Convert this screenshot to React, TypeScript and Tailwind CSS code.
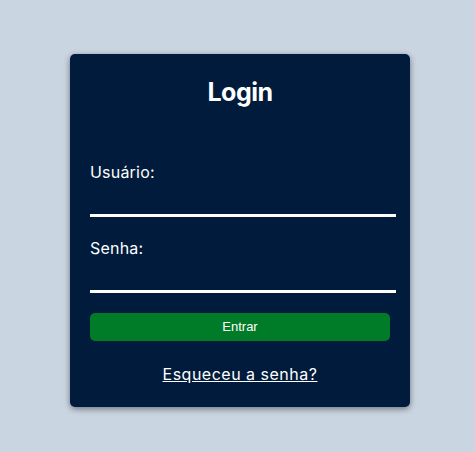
import React from "react";

export default function App() {
  return (
    <div className="min-h-screen w-full bg-[#cad5e2] pt-[54px]" style={{ height: 452 }}>
      <div
        className="ml-[70px] w-[340px] rounded-[5px] bg-[#001b3b] px-5 pt-[22px] pb-[21px] text-white shadow-[0_2px_6px_rgba(0,0,0,0.45)]"
        style={{ fontFamily: "Inter, 'Noto Sans', sans-serif" }}
      >
        <h1 className="text-center text-[25px] font-bold leading-[32px] tracking-[-0.5px]">Login</h1>
        <div className="mt-[52px] flex flex-col">
          <label className="text-[16px] leading-[24px] tracking-[0.2px]">Usuário:</label>
          <input
            type="text"
            className="mt-[12px] h-[21px] w-[306px] border-b-[3px] border-white bg-transparent outline-none"
          />
        </div>
        <div className="mt-[19px] flex flex-col">
          <label className="text-[16px] leading-[24px] tracking-[0.2px]">Senha:</label>
          <input
            type="password"
            className="mt-[12px] h-[21px] w-[306px] border-b-[3px] border-white bg-transparent outline-none"
          />
        </div>
        <button
          className="mt-[20px] h-[28px] w-[300px] rounded-[5px] bg-[#007b28] text-[13px] text-white"
          style={{ fontFamily: "'Liberation Sans', Arial, sans-serif" }}
        >
          Entrar
        </button>
        <div className="mt-[21px] text-center">
          <a href="#" className="text-[16px] leading-[24px] tracking-[0.5px] text-white underline">
            Esqueceu a senha?
          </a>
        </div>
      </div>
    </div>
  );
}
